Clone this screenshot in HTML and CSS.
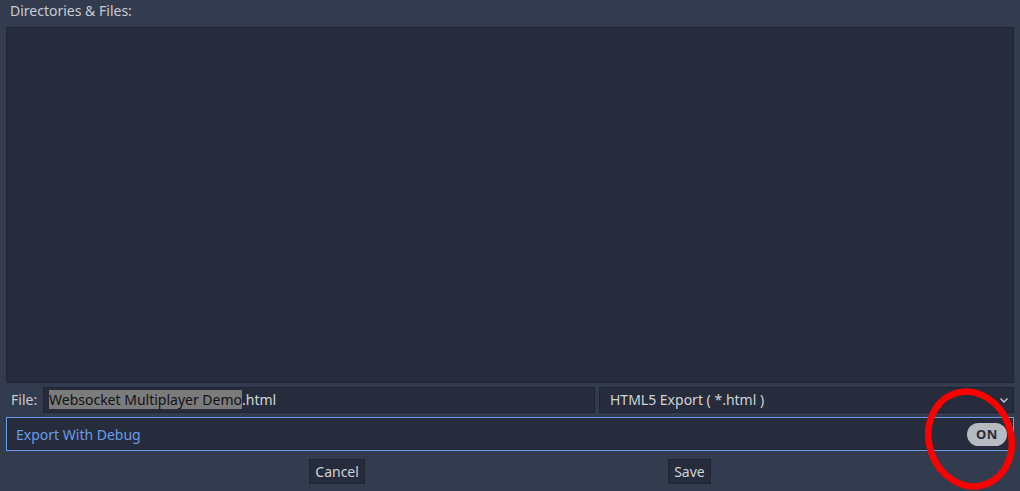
FILE: index.html
```html
<!DOCTYPE html>
<html>
<head>
<meta charset="utf-8">
<link rel="stylesheet" href="styles.css">
</head>
<body>
<div class="dialog">
  <div class="title-label">Directories &amp; Files:</div>
  <div class="file-list"></div>
  <div class="file-row">
    <span class="file-label">File:</span>
    <div class="line-edit"><span class="sel">Websocket Multiplayer Demo</span>.html</div>
    <div class="option-btn">
      <span>HTML5 Export ( *.html )</span>
      <svg class="arrow" width="10" height="8" viewBox="0 0 10 8"><path d="M1.5 2.5 L5 6 L8.5 2.5" fill="none" stroke="#c8ccd4" stroke-width="1.4"/></svg>
    </div>
  </div>
  <div class="debug-row">
    <span class="debug-text">Export With Debug</span>
    <span class="toggle">ON</span>
  </div>
  <div class="buttons">
    <div class="btn">Cancel</div>
    <div class="btn">Save</div>
  </div>
</div>
<svg class="annot" width="110" height="120" viewBox="0 0 110 120">
  <ellipse cx="55" cy="60" rx="41" ry="48" transform="rotate(-18 55 60)" fill="none" stroke="#ff0000" stroke-width="6.5"/>
</svg>
</body>
</html>
```
FILE: styles.css
```css
html, body {
  margin: 0;
  padding: 0;
}
body {
  width: 1020px;
  height: 491px;
  background: #333b4f;
  font-family: "Noto Sans", "DejaVu Sans", sans-serif;
  font-size: 14px;
  color: #d0d3d9;
  overflow: hidden;
  position: relative;
}
.dialog {
  display: flex;
  flex-direction: column;
  height: 491px;
  padding: 0 6px;
  box-sizing: border-box;
}
.title-label {
  height: 27px;
  line-height: 21px;
  padding-left: 4px;
  color: #c9ccd2;
}
.file-list {
  height: 356px;
  box-sizing: border-box;
  background: #262c3b;
  border: 1px solid #1e2330;
}
.file-row {
  margin-top: 4px;
  height: 26px;
  display: grid;
  grid-template-columns: 37px 552px 415px;
  column-gap: 4px;
  margin-left: -4px;
}
.file-label {
  line-height: 26px;
  padding-left: 9px;
  color: #c9ccd2;
}
.line-edit {
  background: #262c3b;
  border: 1px solid #1f2431;
  box-sizing: border-box;
  line-height: 24px;
  padding-left: 5px;
  color: #d6d8dd;
  white-space: nowrap;
}
.sel {
  background: #7b7b7b;
  color: #111318;
  display: inline-block;
  line-height: 19px;
}
.option-btn {
  background: #262c3b;
  border: 1px solid #1f2431;
  box-sizing: border-box;
  line-height: 24px;
  padding-left: 10px;
  padding-right: 4px;
  color: #d0d3d9;
  display: flex;
  justify-content: space-between;
  align-items: center;
}
.arrow {
  display: block;
}
.debug-row {
  margin-top: 4px;
  height: 34px;
  box-sizing: border-box;
  border: 1px solid #699ce8;
  background: #262c3b;
  display: flex;
  align-items: center;
  justify-content: space-between;
  padding: 0 6px 0 9px;
}
.debug-text {
  color: #699ce8;
}
.toggle {
  width: 40px;
  height: 23px;
  border-radius: 12px;
  background: #b7bac1;
  color: #272c38;
  font-weight: bold;
  font-size: 13px;
  line-height: 23px;
  text-align: center;
  letter-spacing: 0.5px;
}
.buttons {
  margin-top: 8px;
  display: flex;
  justify-content: space-evenly;
}
.btn {
  height: 25px;
  box-sizing: border-box;
  background: #262c3b;
  border: 1px solid #1f2431;
  line-height: 23px;
  padding: 0 5px;
  color: #d0d3d9;
}
.annot {
  position: absolute;
  left: 915px;
  top: 379px;
}
```
